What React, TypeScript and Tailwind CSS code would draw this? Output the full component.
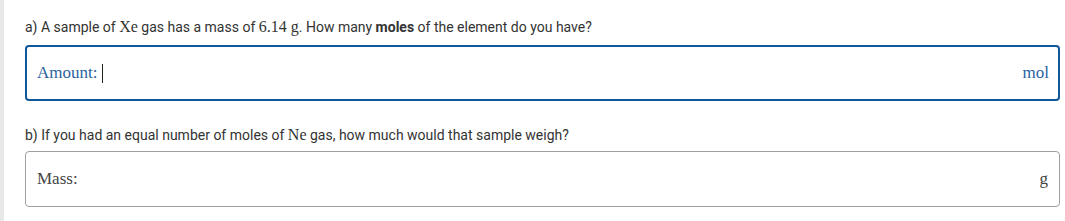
import React from 'react'

const serif = "font-['Liberation_Serif','Times_New_Roman',serif]"

function Field({ label, unit, active }: { label: string; unit: string; active?: boolean }) {
  return (
    <div
      className={
        'flex items-center justify-between h-[56px] rounded-[4px] bg-white ' +
        (active ? 'border-2 border-[#125797] pl-[10px] pr-[9px]' : 'border border-[#a0a0a0] pl-[11px] pr-[11px] h-[55px]')
      }
    >
      <div className={serif + ' text-[17px] flex items-center ' + (active ? 'text-[#2a63a0]' : 'text-[#444]')}>
        {label}
        {active && <span className="ml-[5px] inline-block w-px h-[19px] bg-[#222]" />}
      </div>
      <span className={serif + ' text-[17px] ' + (active ? 'text-[#2a63a0]' : 'text-[#444]')}>{unit}</span>
    </div>
  )
}

export default function App() {
  return (
    <div className="flex w-[1065px] h-[221px] bg-white font-['Roboto','Liberation_Sans',sans-serif] text-[14px] text-[#333]">
      <div className="w-[4px] shrink-0 bg-[#e8e8e8]" />
      <div className="flex-1 pl-[21px] pr-[5px] pt-[17px]">
        <p className="leading-[20px] h-[20px]">
          a) A sample of <span className={serif + ' text-[16px]'}>Xe</span> gas has a mass of{' '}
          <span className={serif + ' text-[16px]'}>6.14 g</span>. How many <b className="font-bold">moles</b> of the element do you have?
        </p>
        <div className="mt-[8px]">
          <Field label="Amount:" unit="mol" active />
        </div>
        <p className="leading-[20px] h-[20px] mt-[24px]">
          b) If you had an equal number of moles of <span className={serif + ' text-[16px]'}>Ne</span> gas, how much would that sample weigh?
        </p>
        <div className="mt-[6px]">
          <Field label="Mass:" unit="g" />
        </div>
      </div>
    </div>
  )
}
